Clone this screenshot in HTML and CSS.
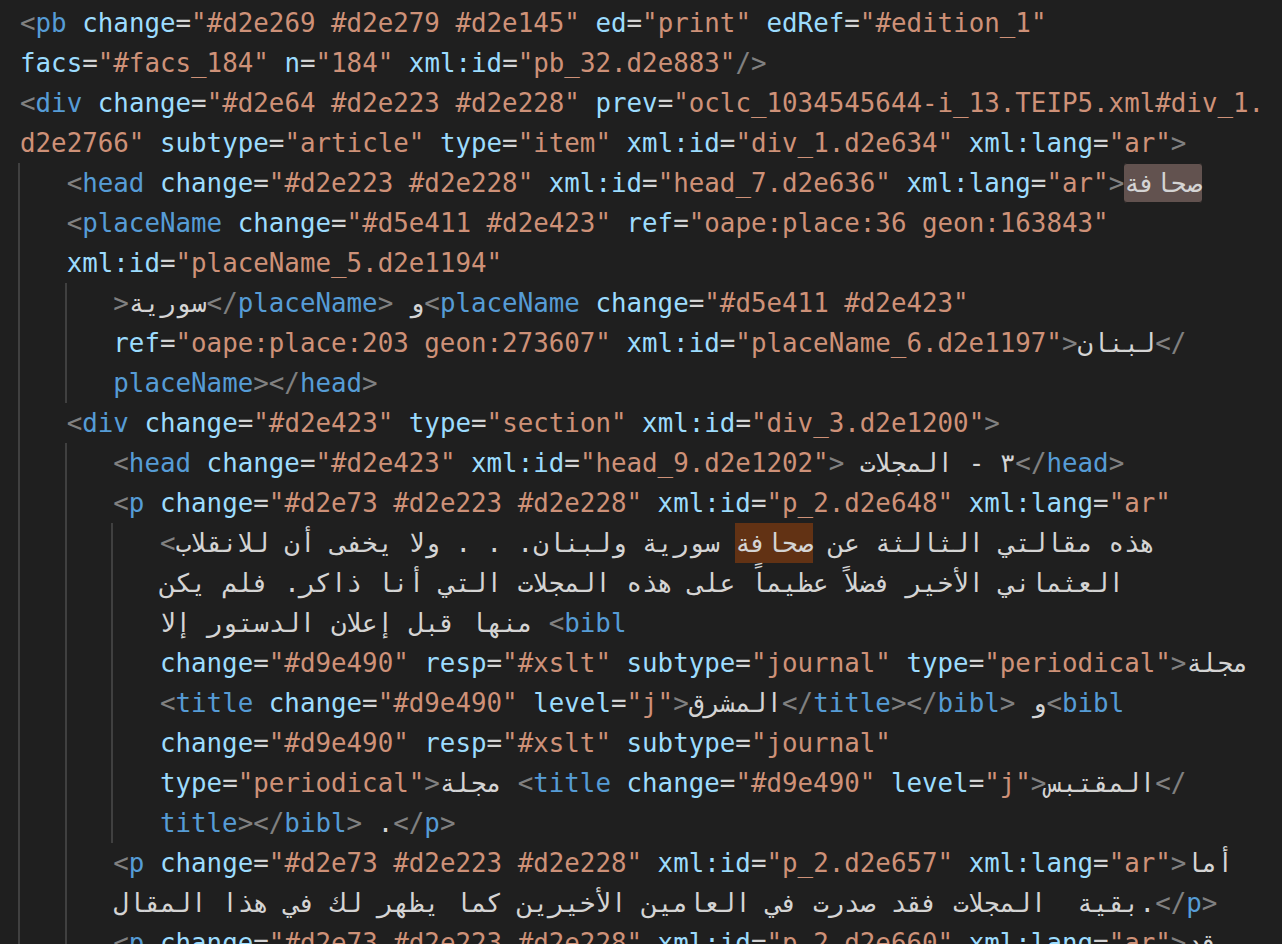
FILE: index.html
```html
<!DOCTYPE html>
<html lang="en">
<head>
<meta charset="utf-8">
<title>XML editor</title>
<link rel="stylesheet" href="styles.css">
</head>
<body>
<div class="editor">
<div class="row"><span class="p">&lt;</span><span class="n">pb</span> <span class="a">change</span><span class="e">=</span><span class="v">"#d2e269 #d2e279 #d2e145"</span> <span class="a">ed</span><span class="e">=</span><span class="v">"print"</span> <span class="a">edRef</span><span class="e">=</span><span class="v">"#edition_1"</span></div>
<div class="row"><span class="a">facs</span><span class="e">=</span><span class="v">"#facs_184"</span> <span class="a">n</span><span class="e">=</span><span class="v">"184"</span> <span class="a">xml:id</span><span class="e">=</span><span class="v">"pb_32.d2e883"</span><span class="p">/&gt;</span></div>
<div class="row"><span class="p">&lt;</span><span class="n">div</span> <span class="a">change</span><span class="e">=</span><span class="v">"#d2e64 #d2e223 #d2e228"</span> <span class="a">prev</span><span class="e">=</span><span class="v">"oclc_1034545644-i_13.TEIP5.xml#div_1.</span></div>
<div class="row"><span class="v">d2e2766"</span> <span class="a">subtype</span><span class="e">=</span><span class="v">"article"</span> <span class="a">type</span><span class="e">=</span><span class="v">"item"</span> <span class="a">xml:id</span><span class="e">=</span><span class="v">"div_1.d2e634"</span> <span class="a">xml:lang</span><span class="e">=</span><span class="v">"ar"</span><span class="p">&gt;</span></div>
<div class="row"><span class="g"></span><span class="p">&lt;</span><span class="n">head</span> <span class="a">change</span><span class="e">=</span><span class="v">"#d2e223 #d2e228"</span> <span class="a">xml:id</span><span class="e">=</span><span class="v">"head_7.d2e636"</span> <span class="a">xml:lang</span><span class="e">=</span><span class="v">"ar"</span><span class="p">&gt;</span><span class="ar"><span class="hl hl-cur">صحافة</span></span></div>
<div class="row"><span class="g"></span><span class="p">&lt;</span><span class="n">placeName</span> <span class="a">change</span><span class="e">=</span><span class="v">"#d5e411 #d2e423"</span> <span class="a">ref</span><span class="e">=</span><span class="v">"oape:place:36 geon:163843"</span></div>
<div class="row"><span class="g"></span><span class="a">xml:id</span><span class="e">=</span><span class="v">"placeName_5.d2e1194"</span></div>
<div class="row"><span class="g"></span><span class="g"></span><span class="p">&gt;</span><span class="ar">سورية</span><span class="p">&lt;/</span><span class="n">placeName</span><span class="p">&gt;</span> <span class="ar">و</span><span class="p">&lt;</span><span class="n">placeName</span> <span class="a">change</span><span class="e">=</span><span class="v">"#d5e411 #d2e423"</span></div>
<div class="row"><span class="g"></span><span class="g"></span><span class="a">ref</span><span class="e">=</span><span class="v">"oape:place:203 geon:273607"</span> <span class="a">xml:id</span><span class="e">=</span><span class="v">"placeName_6.d2e1197"</span><span class="p">&gt;</span><span class="ar">لبنان</span><span class="p">&lt;/</span></div>
<div class="row"><span class="g"></span><span class="g"></span><span class="n">placeName</span><span class="p">&gt;&lt;/</span><span class="n">head</span><span class="p">&gt;</span></div>
<div class="row"><span class="g"></span><span class="p">&lt;</span><span class="n">div</span> <span class="a">change</span><span class="e">=</span><span class="v">"#d2e423"</span> <span class="a">type</span><span class="e">=</span><span class="v">"section"</span> <span class="a">xml:id</span><span class="e">=</span><span class="v">"div_3.d2e1200"</span><span class="p">&gt;</span></div>
<div class="row"><span class="g"></span><span class="g"></span><span class="p">&lt;</span><span class="n">head</span> <span class="a">change</span><span class="e">=</span><span class="v">"#d2e423"</span> <span class="a">xml:id</span><span class="e">=</span><span class="v">"head_9.d2e1202"</span><span class="p">&gt;</span> <span class="ar">٣ - المجلات</span><span class="p">&lt;/</span><span class="n">head</span><span class="p">&gt;</span></div>
<div class="row"><span class="g"></span><span class="g"></span><span class="p">&lt;</span><span class="n">p</span> <span class="a">change</span><span class="e">=</span><span class="v">"#d2e73 #d2e223 #d2e228"</span> <span class="a">xml:id</span><span class="e">=</span><span class="v">"p_2.d2e648"</span> <span class="a">xml:lang</span><span class="e">=</span><span class="v">"ar"</span></div>
<div class="row"><span class="g"></span><span class="g"></span><span class="g"></span><span class="p">&lt;</span><span class="ar">هذه مقالتي الثالثة عن <span class="hl hl-match">صحافة</span> سورية ولبنان. . . ولا يخفى أن للانقلاب</span></div>
<div class="row"><span class="g"></span><span class="g"></span><span class="g"></span><span class="ar">العثماني الأخير فضلاً عظيماً على هذه المجلات التي أنا ذاكر. فلم يكن</span></div>
<div class="row"><span class="g"></span><span class="g"></span><span class="g"></span><span class="ar">منها قبل إعلان الدستور إلا</span> <span class="p">&lt;</span><span class="n">bibl</span></div>
<div class="row"><span class="g"></span><span class="g"></span><span class="g"></span><span class="a">change</span><span class="e">=</span><span class="v">"#d9e490"</span> <span class="a">resp</span><span class="e">=</span><span class="v">"#xslt"</span> <span class="a">subtype</span><span class="e">=</span><span class="v">"journal"</span> <span class="a">type</span><span class="e">=</span><span class="v">"periodical"</span><span class="p">&gt;</span><span class="ar">مجلة</span></div>
<div class="row"><span class="g"></span><span class="g"></span><span class="g"></span><span class="p">&lt;</span><span class="n">title</span> <span class="a">change</span><span class="e">=</span><span class="v">"#d9e490"</span> <span class="a">level</span><span class="e">=</span><span class="v">"j"</span><span class="p">&gt;</span><span class="ar">المشرق</span><span class="p">&lt;/</span><span class="n">title</span><span class="p">&gt;&lt;/</span><span class="n">bibl</span><span class="p">&gt;</span> <span class="ar">و</span><span class="p">&lt;</span><span class="n">bibl</span></div>
<div class="row"><span class="g"></span><span class="g"></span><span class="g"></span><span class="a">change</span><span class="e">=</span><span class="v">"#d9e490"</span> <span class="a">resp</span><span class="e">=</span><span class="v">"#xslt"</span> <span class="a">subtype</span><span class="e">=</span><span class="v">"journal"</span></div>
<div class="row"><span class="g"></span><span class="g"></span><span class="g"></span><span class="a">type</span><span class="e">=</span><span class="v">"periodical"</span><span class="p">&gt;</span><span class="ar">مجلة</span> <span class="p">&lt;</span><span class="n">title</span> <span class="a">change</span><span class="e">=</span><span class="v">"#d9e490"</span> <span class="a">level</span><span class="e">=</span><span class="v">"j"</span><span class="p">&gt;</span><span class="ar">المقتبس</span><span class="p">&lt;/</span></div>
<div class="row"><span class="g"></span><span class="g"></span><span class="g"></span><span class="n">title</span><span class="p">&gt;&lt;/</span><span class="n">bibl</span><span class="p">&gt;</span> .<span class="p">&lt;/</span><span class="n">p</span><span class="p">&gt;</span></div>
<div class="row"><span class="g"></span><span class="g"></span><span class="p">&lt;</span><span class="n">p</span> <span class="a">change</span><span class="e">=</span><span class="v">"#d2e73 #d2e223 #d2e228"</span> <span class="a">xml:id</span><span class="e">=</span><span class="v">"p_2.d2e657"</span> <span class="a">xml:lang</span><span class="e">=</span><span class="v">"ar"</span><span class="p">&gt;</span><span class="ar">أما</span></div>
<div class="row"><span class="g"></span><span class="g"></span><span class="ar">بقية  المجلات فقد صدرت في العامين الأخيرين كما يظهر لك في هذا المقال</span>.<span class="p">&lt;/</span><span class="n">p</span><span class="p">&gt;</span></div>
<div class="row"><span class="g"></span><span class="g"></span><span class="p">&lt;</span><span class="n">p</span> <span class="a">change</span><span class="e">=</span><span class="v">"#d2e73 #d2e223 #d2e228"</span> <span class="a">xml:id</span><span class="e">=</span><span class="v">"p_2.d2e660"</span> <span class="a">xml:lang</span><span class="e">=</span><span class="v">"ar"</span><span class="p">&gt;</span><span class="ar">قد</span></div>
</div>
</body>
</html>
```

FILE: styles.css
```css
html, body {
  margin: 0;
  padding: 0;
  background: #1f1f1f;
  width: 1282px;
  height: 944px;
  overflow: hidden;
}

.editor {
  padding: 3px 0 0 20px;
  font-family: "DejaVu Sans Mono", "DejaVu Sans", "Noto Sans", monospace;
  font-size: 25.83px;
  line-height: 40px;
  color: #d4d4d4;
}

.row {
  height: 40px;
  white-space: pre;
}

.g {
  display: inline-block;
  width: 3ch;
  height: 40px;
  margin-left: -2px;
  padding-left: 2px;
  vertical-align: top;
  box-shadow: inset 2px 0 0 #404040;
}

.p { color: #808080; }
.n { color: #569cd6; }
.a { color: #9cdcfe; }
.e { color: #d4d4d4; }
.v { color: #ce9178; }

.ar {
  direction: rtl;
  unicode-bidi: isolate;
  color: #d4d4d4;
}

.hl {
  display: inline-block;
  vertical-align: top;
  height: 40px;
  line-height: 40px;
}

.hl-cur {
  background: #62524f;
  border-radius: 3px;
  box-shadow: inset 0 1px 0 #1f1f1f, inset 0 -1px 0 #1f1f1f;
}

.hl-match {
  background: #623214;
}
```
